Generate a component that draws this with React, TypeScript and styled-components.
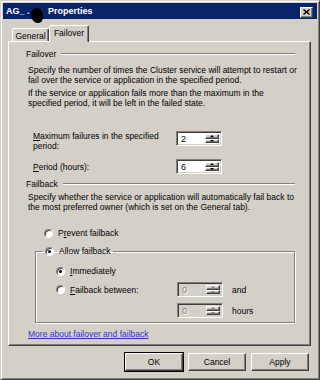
import React from 'react'
import styled, { createGlobalStyle, css } from 'styled-components'

const GlobalStyle = createGlobalStyle`
  html, body {
    margin: 0;
    padding: 0;
    background: #d4d0c8;
  }
  body {
    font-family: Tahoma, 'Liberation Sans Narrow', 'Liberation Sans', Arial, sans-serif;
    font-size: 8.5px;
    color: #000;
  }
`

const raised = css`
  border: 1px solid;
  border-color: #fff #404040 #404040 #fff;
  box-shadow: inset -1px -1px #808080;
`

const sunken = css`
  border: 1px solid;
  border-color: #808080 #fff #fff #808080;
  box-shadow: inset 1px 1px #404040, inset -1px -1px #d4d0c8;
`

const Window = styled.div`
  width: 320px;
  height: 380px;
  box-sizing: border-box;
  background: #d4d0c8;
  border: 1px solid;
  border-color: #d4d0c8 #404040 #404040 #d4d0c8;
  box-shadow: inset 1px 1px #fff, inset -1px -1px #808080;
  padding: 2px;
  display: flex;
  flex-direction: column;
`

const TitleBar = styled.div`
  height: 16px;
  background: #0a246a;
  display: flex;
  align-items: center;
  justify-content: space-between;
  padding: 0 4px 0 3px;
`

const Title = styled.div`
  color: #fff;
  font-family: Tahoma, 'Liberation Sans', Arial, sans-serif;
  font-weight: bold;
  font-size: 9px;
  display: flex;
  align-items: center;
  white-space: pre;
`

const Blot = styled.span`
  display: inline-block;
  width: 12px;
  height: 15px;
  margin: 4px 3px -4px 1px;
  background: #000;
  border-radius: 45% 55% 40% 60%;
`

const CloseButton = styled.div`
  ${raised};
  width: 11px;
  height: 9px;
  margin-top: 2px;
  background: #d4d0c8;
  display: flex;
  align-items: center;
  justify-content: center;
`

const Body = styled.div`
  flex: 1;
  padding: 6px 6px 0 5px;
  display: flex;
  flex-direction: column;
`

const TabRow = styled.div`
  display: flex;
  align-items: flex-end;
  padding-left: 4px;
  height: 16px;
  position: relative;
  z-index: 1;
`

const Tab = styled.div<{ $active?: boolean }>`
  box-sizing: border-box;
  border: 1px solid;
  border-bottom: none;
  border-color: #fff #404040 transparent #fff;
  box-shadow: inset -1px 0 #808080;
  border-radius: 2px 2px 0 0;
  background: #d4d0c8;
  display: flex;
  align-items: center;
  justify-content: center;
  white-space: nowrap;
  ${(p) =>
    p.$active
      ? css`
          width: 40px;
          height: 17px;
          margin-bottom: -1px;
          padding-bottom: 2px;
        `
      : css`
          width: 37px;
          height: 13px;
          padding-top: 1px;
        `}
`

const Panel = styled.div`
  ${raised};
  height: 305px;
  box-sizing: border-box;
  padding: 7px 15px 0 17px;
  display: flex;
  flex-direction: column;
`

const SectionHeader = styled.div<{ $top: number }>`
  display: flex;
  align-items: center;
  gap: 5px;
  line-height: 10px;
  margin-top: ${(p) => p.$top}px;
  &::after {
    content: '';
    flex: 1;
    border-top: 1px solid #808080;
    border-bottom: 1px solid #fff;
  }
`

const Para = styled.p<{ $top: number }>`
  margin: ${(p) => p.$top}px 0 0 2px;
  line-height: 10px;
  white-space: nowrap;
`

const SpinRow = styled.div<{ $top: number; $indent: number; $labelWidth: number; $alignTop?: boolean }>`
  display: grid;
  grid-template-columns: ${(p) => p.$labelWidth}px 46px auto;
  column-gap: 9px;
  align-items: ${(p) => (p.$alignTop ? 'start' : 'center')};
  margin-top: ${(p) => p.$top}px;
  padding-left: ${(p) => p.$indent}px;
  line-height: 10px;
`

const Label = styled.span`
  white-space: nowrap;
`

const Key = styled.span`
  text-decoration: underline;
`

const Spinner = styled.div<{ $disabled?: boolean }>`
  ${sunken};
  box-sizing: border-box;
  height: 15px;
  background: ${(p) => (p.$disabled ? '#d4d0c8' : '#fff')};
  color: ${(p) => (p.$disabled ? '#808080' : '#000')};
  text-shadow: ${(p) => (p.$disabled ? '1px 1px #fff' : 'none')};
  display: flex;
  align-items: stretch;
  padding: 2px 2px 2px 4px;
`

const SpinValue = styled.span`
  flex: 1;
  display: flex;
  align-items: center;
  font-size: 9px;
`

const SpinButtons = styled.div`
  width: 14px;
  display: flex;
  flex-direction: column;
`

const SpinButton = styled.div`
  ${raised};
  flex: 1;
  background: #d4d0c8;
  display: flex;
  align-items: center;
  justify-content: center;
`

const Arrow = styled.span<{ $down?: boolean; $disabled?: boolean }>`
  width: 0;
  height: 0;
  border-left: 2px solid transparent;
  border-right: 2px solid transparent;
  ${(p) =>
    p.$down
      ? `border-top: 2px solid ${p.$disabled ? '#808080' : '#000'};`
      : `border-bottom: 2px solid ${p.$disabled ? '#808080' : '#000'};`}
`

const RadioRow = styled.label<{ $top: number; $indent: number }>`
  display: flex;
  align-items: center;
  gap: 5px;
  margin-top: ${(p) => p.$top}px;
  padding-left: ${(p) => p.$indent}px;
  line-height: 10px;
`

const Radio = styled.span<{ $checked?: boolean }>`
  box-sizing: border-box;
  width: 9px;
  height: 9px;
  border-radius: 50%;
  border: 1px solid;
  border-color: #808080 #fff #fff #808080;
  box-shadow: inset 1px 1px #404040;
  background: #fff;
  display: flex;
  align-items: center;
  justify-content: center;
  &::after {
    content: '';
    width: 3px;
    height: 3px;
    border-radius: 50%;
    background: ${(p) => (p.$checked ? '#000' : 'transparent')};
  }
`

const GroupBox = styled.fieldset`
  margin: 8px 0 0 9px;
  padding: 5px 0 4px 0;
  border: 1px solid #808080;
  box-shadow: 1px 1px #fff, inset 1px 1px #fff;
  height: 77px;
  box-sizing: border-box;
`

const Legend = styled.legend`
  display: flex;
  align-items: center;
  gap: 5px;
  padding: 0 2px;
  margin-left: 7px;
  line-height: 10px;
`

const Link = styled.a`
  margin: 6px 0 0 2px;
  color: #3030d0;
  text-decoration: underline;
  line-height: 10px;
  cursor: pointer;
`

const ButtonRow = styled.div`
  display: flex;
  justify-content: flex-end;
  gap: 5px;
  margin-top: 7px;
  padding-right: 2px;
`

const Button = styled.button<{ $default?: boolean }>`
  ${raised};
  width: 58px;
  height: 18px;
  background: #d4d0c8;
  font: inherit;
  color: #000;
  padding: 0;
  ${(p) =>
    p.$default &&
    css`
      outline: 1px solid #000;
      outline-offset: 0;
    `}
`

function Spin({ value, disabled }: { value: string; disabled?: boolean }) {
  return (
    <Spinner $disabled={disabled}>
      <SpinValue>{value}</SpinValue>
      <SpinButtons>
        <SpinButton>
          <Arrow $disabled={disabled} />
        </SpinButton>
        <SpinButton>
          <Arrow $down $disabled={disabled} />
        </SpinButton>
      </SpinButtons>
    </Spinner>
  )
}

export default function App() {
  return (
    <>
      <GlobalStyle />
      <Window>
        <TitleBar>
          <Title>
            AG_ .<Blot /> Properties
          </Title>
          <CloseButton>
            <svg width="7" height="6" viewBox="0 0 7 6">
              <path d="M0.5 0.5 L6.5 5.5 M6.5 0.5 L0.5 5.5" stroke="#000" strokeWidth="1.4" />
            </svg>
          </CloseButton>
        </TitleBar>
        <Body>
          <TabRow>
            <Tab>General</Tab>
            <Tab $active>Failover</Tab>
          </TabRow>
          <Panel>
            <SectionHeader $top={0}>Failover</SectionHeader>
            <Para $top={6}>
              Specify the number of times the Cluster service will attempt to restart or
              <br />
              fail over the service or application in the specified period.
            </Para>
            <Para $top={3}>
              If the service or application fails more than the maximum in the
              <br />
              specified period, it will be left in the failed state.
            </Para>
            <SpinRow $top={23} $indent={7} $labelWidth={134} $alignTop>
              <Label>
                <Key>M</Key>aximum failures in the specified
                <br />
                period:
              </Label>
              <Spin value="2" />
            </SpinRow>
            <SpinRow $top={8} $indent={7} $labelWidth={134}>
              <Label>
                <Key>P</Key>eriod (hours):
              </Label>
              <Spin value="6" />
            </SpinRow>
            <SectionHeader $top={5}>Failback</SectionHeader>
            <Para $top={3}>
              Specify whether the service or application will automatically fail back to
              <br />
              the most preferred owner (which is set on the General tab).
            </Para>
            <RadioRow $top={16} $indent={18}>
              <Radio />
              <span>
                P<Key>r</Key>event failback
              </span>
            </RadioRow>
            <GroupBox>
              <Legend>
                <Radio $checked />
                <span>Allow failback</span>
              </Legend>
              <RadioRow $top={5} $indent={20}>
                <Radio $checked />
                <span>
                  <Key>I</Key>mmediately
                </span>
              </RadioRow>
              <SpinRow $top={6} $indent={20} $labelWidth={112}>
                <RadioRow $top={0} $indent={0}>
                  <Radio />
                  <span>
                    <Key>F</Key>ailback between:
                  </span>
                </RadioRow>
                <Spin value="0" disabled />
                <Label>and</Label>
              </SpinRow>
              <SpinRow $top={6} $indent={20} $labelWidth={112}>
                <span />
                <Spin value="0" disabled />
                <Label>hours</Label>
              </SpinRow>
            </GroupBox>
            <Link>More about failover and failback</Link>
          </Panel>
          <ButtonRow>
            <Button $default>OK</Button>
            <Button>Cancel</Button>
            <Button>Apply</Button>
          </ButtonRow>
        </Body>
      </Window>
    </>
  )
}
